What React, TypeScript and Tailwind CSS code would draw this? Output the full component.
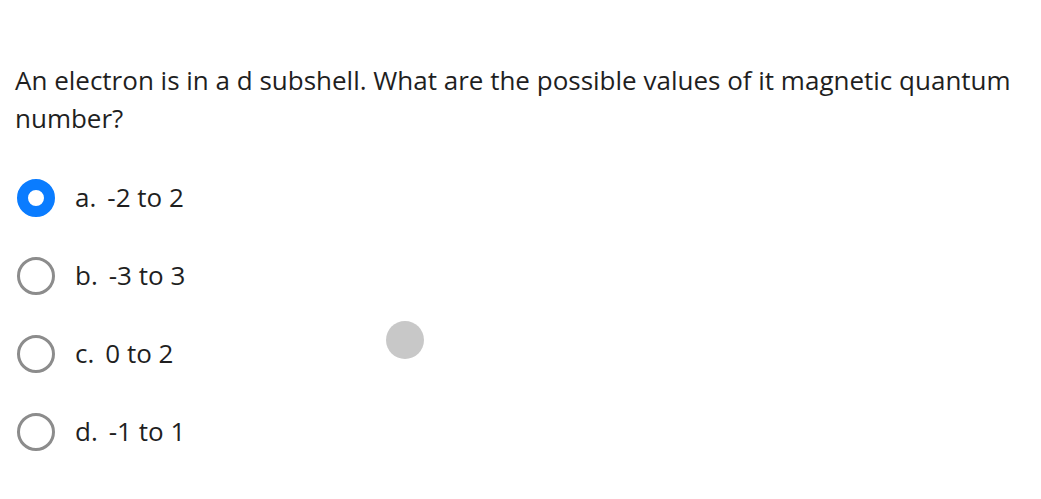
import React from 'react';

const options = [
  { letter: 'a.', text: '-2 to 2', selected: true },
  { letter: 'b.', text: '-3 to 3', selected: false },
  { letter: 'c.', text: '0 to 2', selected: false },
  { letter: 'd.', text: '-1 to 1', selected: false },
];

const App: React.FC = () => {
  return (
    <div className="relative w-[1041px] h-[499px] bg-white text-[#1f1f1f] font-['Open_Sans',sans-serif] overflow-hidden">
      <div className="pt-[61px] pl-[15px] pr-4">
        <p className="text-[26px] leading-[38px]">
          An electron is in a d subshell. What are the possible values of it magnetic quantum number?
        </p>

        <div className="mt-[22px] flex flex-col">
          {options.map((o) => (
            <div key={o.letter} className="flex items-center h-[78px]">
              {o.selected ? (
                <div className="w-[38px] h-[38px] rounded-full border-[11px] border-[#0a7cff] bg-white shrink-0 ml-[2px]" />
              ) : (
                <div className="w-[38px] h-[38px] rounded-full border-[3px] border-[#8c8c8c] bg-white shrink-0 ml-[2px]" />
              )}
              <div className="flex items-center mb-[3px] text-[26px] leading-none">
                <span className="ml-[20px]">{o.letter}</span>
                <span className="ml-[11px]">{o.text}</span>
              </div>
            </div>
          ))}
        </div>
      </div>

      {/* touch indicator */}
      <div className="absolute left-[386px] top-[321px] w-[38px] h-[38px] rounded-full bg-[#c8c8c8]" />
    </div>
  );
};

export default App;
